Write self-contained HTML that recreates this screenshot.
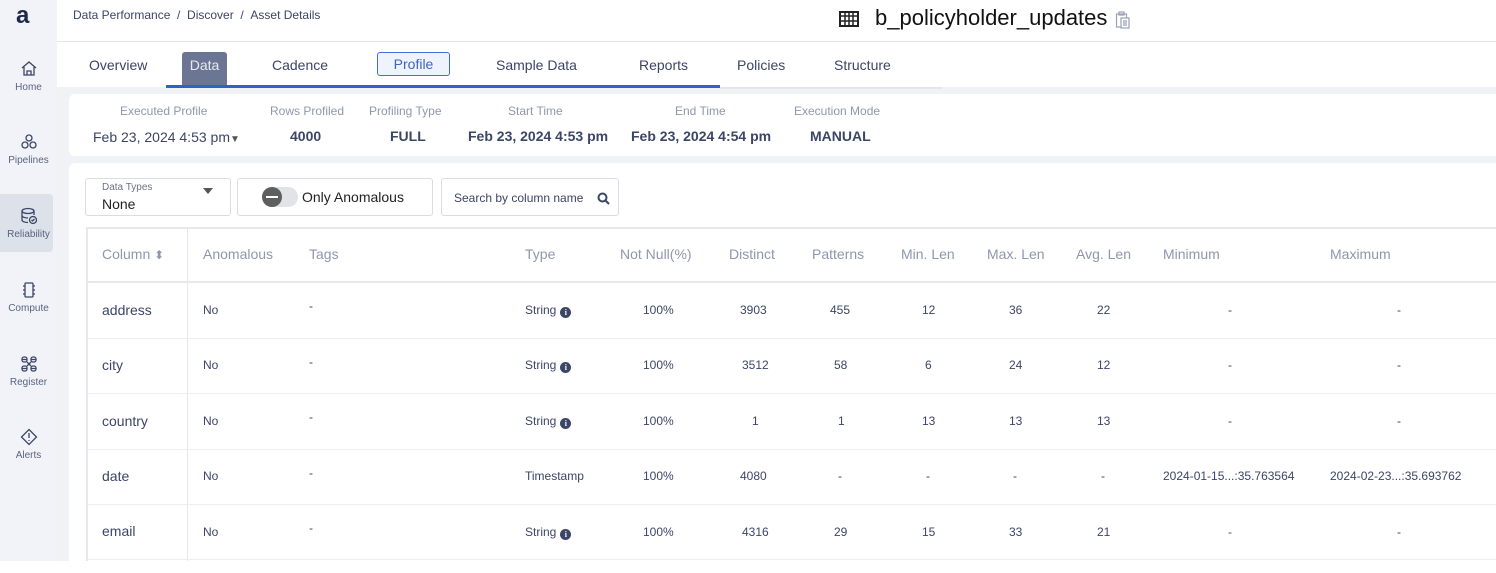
<!DOCTYPE html>
<html><head><meta charset="utf-8">
<style>
*{box-sizing:border-box;margin:0;padding:0}
body{width:1496px;height:561px;overflow:hidden;background:#fff;font-family:"Liberation Sans",sans-serif;color:#3b4566;position:relative}
.a{position:absolute;white-space:nowrap}
.side{position:absolute;left:0;top:0;width:57px;height:561px;background:#f1f3f8}
.nav{position:absolute;left:0;width:57px;text-align:center;font-size:10px;color:#5a6380}
.nav svg{display:block;margin:0 auto 4px}
.lbl{font-size:12px;color:#8f97ad}
.val{font-size:14px;color:#3b4566}
.th{font-size:14px;color:#8f97ad;top:246px}
.c{font-size:12px;color:#3b4566}
.cn{font-size:14px;color:#3b4566}
.hl{position:absolute;height:1px;background:#eceef3}
.info{display:inline-block;width:11px;height:11px;border-radius:50%;background:#3b4566;color:#fff;font-size:8px;font-weight:bold;text-align:center;line-height:11px;vertical-align:-1px;margin-left:4px;font-family:"Liberation Serif",serif}
</style></head><body>
<div class="side">
 <div class="a" style="left:16px;top:2px;font-size:24px;font-weight:bold;color:#1f2a4a">a</div>
 <div class="nav" style="top:60px"><svg width="18" height="18" viewBox="0 0 18 18" fill="none" stroke="#3b4566" stroke-width="1.3"><path d="M2 8L9 2l7 6M4 7v8h10V7M7 15v-4h4v4"/></svg>Home</div>
 <div class="nav" style="top:133px"><svg width="18" height="18" viewBox="0 0 18 18" fill="none" stroke="#3b4566" stroke-width="1.3"><circle cx="9" cy="5" r="3"/><circle cx="5" cy="12" r="3"/><circle cx="13" cy="12" r="3"/></svg>Pipelines</div>
 <div style="position:absolute;left:0;top:194px;width:53px;height:58px;background:#dde1ea;border-radius:0 4px 4px 0"></div>
 <div class="nav" style="top:207px"><svg width="18" height="18" viewBox="0 0 18 18" fill="none" stroke="#3b4566" stroke-width="1.3"><ellipse cx="8" cy="4" rx="6" ry="2.5"/><path d="M2 4v9c0 1.5 3 2.5 6 2.5M14 4v4M2 8.5c0 1.5 3 2.5 6 2.5"/><circle cx="13" cy="13" r="3.5"/><path d="M11.5 13l1 1 2-2"/></svg>Reliability</div>
 <div class="nav" style="top:281px"><svg width="18" height="18" viewBox="0 0 18 18" fill="none" stroke="#3b4566" stroke-width="1.3"><rect x="5" y="2" width="8" height="14" rx="1"/><path d="M3 5h2M3 9h2M3 13h2M13 5h2M13 9h2M13 13h2"/></svg>Compute</div>
 <div class="nav" style="top:355px"><svg width="18" height="18" viewBox="0 0 18 18" fill="none" stroke="#3b4566" stroke-width="1.3"><rect x="2" y="2" width="5" height="5" rx="2"/><rect x="11" y="2" width="5" height="5" rx="2"/><rect x="2" y="11" width="5" height="5" rx="2"/><rect x="11" y="11" width="5" height="5" rx="2"/><path d="M7 7l4 4M11 7l-4 4M2 4.5h5M11 4.5h5M2 13.5h5M11 13.5h5"/></svg>Register</div>
 <div class="nav" style="top:428px"><svg width="18" height="18" viewBox="0 0 18 18" fill="none" stroke="#3b4566" stroke-width="1.3"><path d="M9 1.5L16.5 9 9 16.5 1.5 9z"/><path d="M9 5v5M9 12v1"/></svg>Alerts</div>
</div>

<div class="a" style="left:73px;top:8px;font-size:12px;color:#3b4566">Data Performance &nbsp;/ &nbsp;Discover &nbsp;/ &nbsp;Asset Details</div>
<svg class="a" style="left:839px;top:11px" width="20" height="16" viewBox="0 0 20 16"><rect x="1" y="1" width="18" height="14" fill="none" stroke="#222" stroke-width="2"/><path d="M1 5h18M1 10h18M6 1v14M10 1v14M14 1v14" stroke="#222" stroke-width="1.5"/></svg>
<div class="a" style="left:875px;top:5px;font-size:22px;color:#111">b_policyholder_updates</div>
<svg class="a" style="left:1115px;top:11px" width="16" height="18" viewBox="0 0 16 18" fill="none" stroke="#9aa1b4" stroke-width="1.2"><rect x="1.5" y="3" width="10" height="13"/><rect x="4" y="1" width="5" height="3"/><rect x="6" y="7" width="8" height="10" fill="#fff"/><path d="M8 10h4M8 12h4M8 14h4"/></svg>
<div class="hl" style="left:57px;top:41px;width:1439px;background:#e4e6ec"></div>

<div class="a" style="left:89px;top:57px;font-size:14px">Overview</div>
<div class="a" style="left:182px;top:52px;width:45px;height:34px;background:#6b7594;border-radius:3px 3px 0 0;color:#e8eaf0;font-size:14px;text-align:center;padding-top:5px">Data</div>
<div class="a" style="left:272px;top:57px;font-size:14px">Cadence</div>
<div class="a" style="left:377px;top:52px;width:73px;height:24px;border:1px solid #3d6fd6;background:#eef3fd;border-radius:3px;color:#3d63c6;font-size:14px;text-align:center;padding-top:3px">Profile</div>
<div class="a" style="left:496px;top:57px;font-size:14px">Sample Data</div>
<div class="a" style="left:639px;top:57px;font-size:14px">Reports</div>
<div class="a" style="left:737px;top:57px;font-size:14px">Policies</div>
<div class="a" style="left:834px;top:57px;font-size:14px">Structure</div>
<div class="a" style="left:57px;top:87px;width:1439px;height:474px;background:#f1f2f6"></div>
<div class="a" style="left:166px;top:85px;width:554px;height:3px;background:#2d62c9"></div>
<div class="a" style="left:720px;top:87px;width:222px;height:2px;background:#e4e6ec"></div>

<div class="a" style="left:69px;top:94px;width:1440px;height:62px;background:#fff;border-radius:6px"></div>
<div class="a lbl" style="left:120px;top:104px">Executed Profile</div>
<div class="a val" style="left:93px;top:129px">Feb 23, 2024 4:53 pm<span style="font-size:10px;color:#555">▼</span></div>
<div class="a lbl" style="left:270px;top:104px">Rows Profiled</div>
<div class="a val" style="left:290px;top:128px;font-weight:bold;color:#3b4566">4000</div>
<div class="a lbl" style="left:369px;top:104px">Profiling Type</div>
<div class="a val" style="left:390px;top:128px;font-weight:bold">FULL</div>
<div class="a lbl" style="left:508px;top:104px">Start Time</div>
<div class="a val" style="left:468px;top:128px;font-weight:bold">Feb 23, 2024 4:53 pm</div>
<div class="a lbl" style="left:675px;top:104px">End Time</div>
<div class="a val" style="left:631px;top:128px;font-weight:bold">Feb 23, 2024 4:54 pm</div>
<div class="a lbl" style="left:794px;top:104px">Execution Mode</div>
<div class="a val" style="left:810px;top:128px;font-weight:bold">MANUAL</div>

<div class="a" style="left:69px;top:163px;width:1440px;height:410px;background:#fff;border-radius:6px"></div>
<div class="a" style="left:85px;top:178px;width:146px;height:38px;border:1px solid #d9dce4;border-radius:3px"></div>
<div class="a" style="left:102px;top:182px;font-size:10px;color:#6b7284">Data Types</div>
<div class="a" style="left:102px;top:196px;font-size:14px;color:#222">None</div>
<div class="a" style="left:203px;top:188px;width:0;height:0;border-left:5px solid transparent;border-right:5px solid transparent;border-top:6px solid #555"></div>
<div class="a" style="left:237px;top:178px;width:196px;height:38px;border:1px solid #d9dce4;border-radius:3px"></div>
<div class="a" style="left:262px;top:187px;width:36px;height:20px;border-radius:10px;background:#e2e3e6"></div>
<div class="a" style="left:262px;top:187px;width:20px;height:20px;border-radius:50%;background:#5f5f5f"></div>
<div class="a" style="left:266px;top:196px;width:12px;height:2px;background:#fff"></div>
<div class="a" style="left:302px;top:189px;font-size:14px;color:#222">Only Anomalous</div>
<div class="a" style="left:441px;top:178px;width:178px;height:38px;border:1px solid #d9dce4;border-radius:3px"></div>
<div class="a" style="left:454px;top:191px;font-size:12px;color:#3b4566">Search by column name</div>
<svg class="a" style="left:597px;top:192px" width="13" height="13" viewBox="0 0 13 13" fill="none" stroke="#3b4566" stroke-width="2"><circle cx="5.5" cy="5.5" r="4"/><path d="M8.5 8.5l3.5 3.5"/></svg>

<div class="a" style="left:86px;top:227px;width:1410px;height:334px;border-left:2px solid #e6e8ee;border-top:2px solid #e6e8ee"></div>
<div class="a" style="left:187px;top:228px;width:1px;height:333px;background:#e6e8ee"></div>
<div class="hl" style="left:86px;top:281px;width:1410px;height:2px;background:#e6e8ee"></div>
<div class="a th" style="left:102px">Column <span style="font-size:12px">⬍</span></div>
<div class="a th" style="left:203px">Anomalous</div>
<div class="a th" style="left:309px">Tags</div>
<div class="a th" style="left:525px">Type</div>
<div class="a th" style="left:620px">Not Null(%)</div>
<div class="a th" style="left:729px">Distinct</div>
<div class="a th" style="left:812px">Patterns</div>
<div class="a th" style="left:901px">Min. Len</div>
<div class="a th" style="left:987px">Max. Len</div>
<div class="a th" style="left:1076px">Avg. Len</div>
<div class="a th" style="left:1163px">Minimum</div>
<div class="a th" style="left:1330px">Maximum</div>

<div class="hl" style="left:88px;top:338px;width:1408px"></div>
<div class="hl" style="left:88px;top:393px;width:1408px"></div>
<div class="hl" style="left:88px;top:449px;width:1408px"></div>
<div class="hl" style="left:88px;top:504px;width:1408px"></div>
<div class="hl" style="left:88px;top:559px;width:1408px"></div>

<div class="a cn" style="left:102px;top:302px">address</div><div class="a c" style="left:203px;top:303px">No</div><div class="a c" style="left:309px;top:299px">-</div><div class="a c" style="left:525px;top:303px">String<span class="info">i</span></div>
<div class="a c" style="left:643px;top:303px">100%</div><div class="a c" style="left:740px;top:303px">3903</div><div class="a c" style="left:830px;top:303px">455</div><div class="a c" style="left:922px;top:303px">12</div><div class="a c" style="left:1009px;top:303px">36</div><div class="a c" style="left:1097px;top:303px">22</div><div class="a c" style="left:1228px;top:303px">-</div><div class="a c" style="left:1397px;top:303px">-</div>

<div class="a cn" style="left:102px;top:357px">city</div><div class="a c" style="left:203px;top:358px">No</div><div class="a c" style="left:309px;top:355px">-</div><div class="a c" style="left:525px;top:358px">String<span class="info">i</span></div>
<div class="a c" style="left:643px;top:358px">100%</div><div class="a c" style="left:742px;top:358px">3512</div><div class="a c" style="left:834px;top:358px">58</div><div class="a c" style="left:925px;top:358px">6</div><div class="a c" style="left:1009px;top:358px">24</div><div class="a c" style="left:1097px;top:358px">12</div><div class="a c" style="left:1228px;top:358px">-</div><div class="a c" style="left:1397px;top:358px">-</div>

<div class="a cn" style="left:102px;top:413px">country</div><div class="a c" style="left:203px;top:414px">No</div><div class="a c" style="left:309px;top:410px">-</div><div class="a c" style="left:525px;top:414px">String<span class="info">i</span></div>
<div class="a c" style="left:643px;top:414px">100%</div><div class="a c" style="left:752px;top:414px">1</div><div class="a c" style="left:838px;top:414px">1</div><div class="a c" style="left:922px;top:414px">13</div><div class="a c" style="left:1009px;top:414px">13</div><div class="a c" style="left:1097px;top:414px">13</div><div class="a c" style="left:1228px;top:414px">-</div><div class="a c" style="left:1397px;top:414px">-</div>

<div class="a cn" style="left:102px;top:468px">date</div><div class="a c" style="left:203px;top:469px">No</div><div class="a c" style="left:309px;top:466px">-</div><div class="a c" style="left:525px;top:469px">Timestamp</div>
<div class="a c" style="left:643px;top:469px">100%</div><div class="a c" style="left:740px;top:469px">4080</div><div class="a c" style="left:838px;top:469px">-</div><div class="a c" style="left:926px;top:469px">-</div><div class="a c" style="left:1013px;top:469px">-</div><div class="a c" style="left:1101px;top:469px">-</div><div class="a c" style="left:1163px;top:469px">2024-01-15...:35.763564</div><div class="a c" style="left:1330px;top:469px">2024-02-23...:35.693762</div>

<div class="a cn" style="left:102px;top:523px">email</div><div class="a c" style="left:203px;top:525px">No</div><div class="a c" style="left:309px;top:521px">-</div><div class="a c" style="left:525px;top:525px">String<span class="info">i</span></div>
<div class="a c" style="left:643px;top:525px">100%</div><div class="a c" style="left:742px;top:525px">4316</div><div class="a c" style="left:834px;top:525px">29</div><div class="a c" style="left:922px;top:525px">15</div><div class="a c" style="left:1009px;top:525px">33</div><div class="a c" style="left:1097px;top:525px">21</div><div class="a c" style="left:1228px;top:525px">-</div><div class="a c" style="left:1397px;top:525px">-</div>
</body></html>
